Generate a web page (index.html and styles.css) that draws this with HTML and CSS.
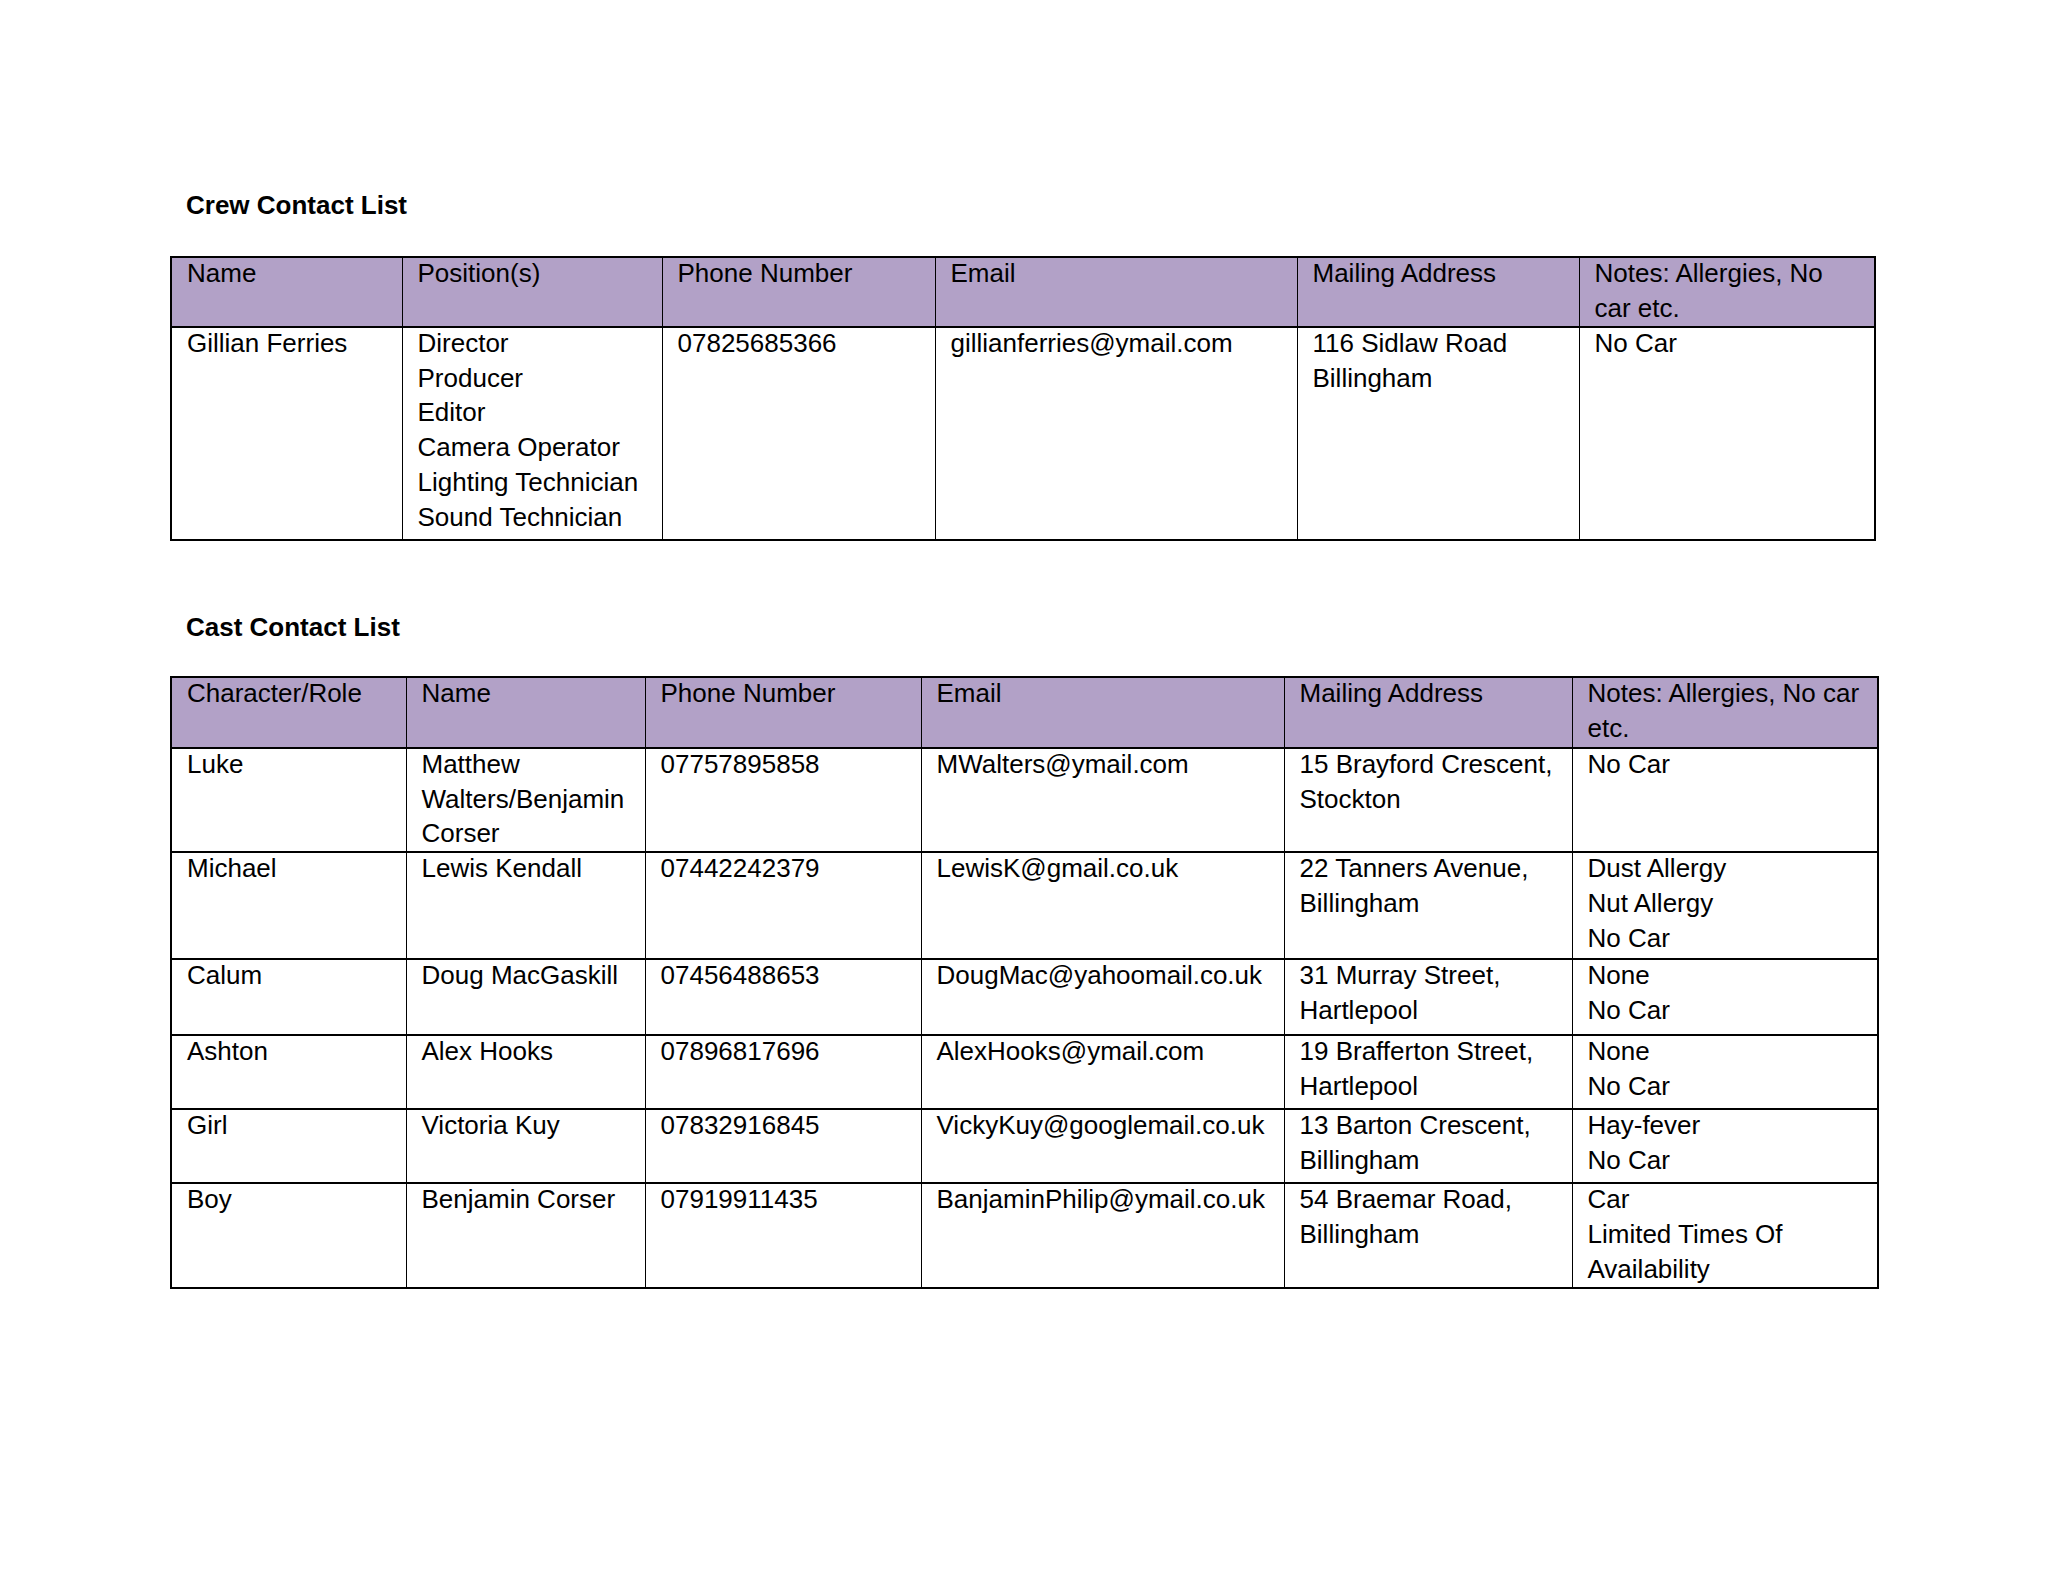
FILE: index.html
```html
<!DOCTYPE html>
<html lang="en">
<head>
<meta charset="utf-8">
<title>Contact Lists</title>
<link rel="stylesheet" href="styles.css">
</head>
<body>
<main class="page">
  <h2 class="title">Crew Contact List</h2>
  <table class="sheet crew">
    <colgroup>
      <col class="c231"><col class="c260"><col class="c273"><col class="c362"><col class="c282"><col class="c296">
    </colgroup>
    <tr class="r70">
      <th><div class="in">Name</div></th>
      <th><div class="in">Position(s)</div></th>
      <th><div class="in">Phone Number</div></th>
      <th><div class="in">Email</div></th>
      <th><div class="in">Mailing Address</div></th>
      <th><div class="in">Notes: Allergies, No<br>car etc.</div></th>
    </tr>
    <tr class="r213">
      <td><div class="in">Gillian Ferries</div></td>
      <td><div class="in">Director<br>Producer<br>Editor<br>Camera Operator<br>Lighting Technician<br>Sound Technician</div></td>
      <td><div class="in">07825685366</div></td>
      <td><div class="in">gillianferries@ymail.com</div></td>
      <td><div class="in">116 Sidlaw Road<br>Billingham</div></td>
      <td><div class="in">No Car</div></td>
    </tr>
  </table>

  <h2 class="title cast-title">Cast Contact List</h2>
  <table class="sheet cast">
    <colgroup>
      <col class="c235"><col class="c239"><col class="c276"><col class="c363"><col class="c288"><col class="c306">
    </colgroup>
    <tr class="r71">
      <th><div class="in">Character/Role</div></th>
      <th><div class="in">Name</div></th>
      <th><div class="in">Phone Number</div></th>
      <th><div class="in">Email</div></th>
      <th><div class="in">Mailing Address</div></th>
      <th><div class="in">Notes: Allergies, No car<br>etc.</div></th>
    </tr>
    <tr class="r104">
      <td><div class="in">Luke</div></td>
      <td><div class="in">Matthew<br>Walters/Benjamin<br>Corser</div></td>
      <td><div class="in">07757895858</div></td>
      <td><div class="in">MWalters@ymail.com</div></td>
      <td><div class="in">15 Brayford Crescent,<br>Stockton</div></td>
      <td><div class="in">No Car</div></td>
    </tr>
    <tr class="r107">
      <td><div class="in">Michael</div></td>
      <td><div class="in">Lewis Kendall</div></td>
      <td><div class="in">07442242379</div></td>
      <td><div class="in">LewisK@gmail.co.uk</div></td>
      <td><div class="in">22 Tanners Avenue,<br>Billingham</div></td>
      <td><div class="in">Dust Allergy<br>Nut Allergy<br>No Car</div></td>
    </tr>
    <tr class="r76">
      <td><div class="in">Calum</div></td>
      <td><div class="in">Doug MacGaskill</div></td>
      <td><div class="in">07456488653</div></td>
      <td><div class="in">DougMac@yahoomail.co.uk</div></td>
      <td><div class="in">31 Murray Street,<br>Hartlepool</div></td>
      <td><div class="in">None<br>No Car</div></td>
    </tr>
    <tr class="r74">
      <td><div class="in">Ashton</div></td>
      <td><div class="in">Alex Hooks</div></td>
      <td><div class="in">07896817696</div></td>
      <td><div class="in">AlexHooks@ymail.com</div></td>
      <td><div class="in">19 Brafferton Street,<br>Hartlepool</div></td>
      <td><div class="in">None<br>No Car</div></td>
    </tr>
    <tr class="r74">
      <td><div class="in">Girl</div></td>
      <td><div class="in">Victoria Kuy</div></td>
      <td><div class="in">07832916845</div></td>
      <td><div class="in">VickyKuy@googlemail.co.uk</div></td>
      <td><div class="in">13 Barton Crescent,<br>Billingham</div></td>
      <td><div class="in">Hay-fever<br>No Car</div></td>
    </tr>
    <tr class="r105">
      <td><div class="in">Boy</div></td>
      <td><div class="in">Benjamin Corser</div></td>
      <td><div class="in">07919911435</div></td>
      <td><div class="in">BanjaminPhilip@ymail.co.uk</div></td>
      <td><div class="in">54 Braemar Road,<br>Billingham</div></td>
      <td><div class="in">Car<br>Limited Times Of<br>Availability</div></td>
    </tr>
  </table>
</main>
</body>
</html>
```

FILE: styles.css
```css
html, body {
  margin: 0;
  padding: 0;
  background: #ffffff;
}

body {
  font-family: "Liberation Sans", Arial, sans-serif;
  color: #000000;
}

.page {
  padding: 188px 0 0 170px;
}

.title {
  margin: 0 0 33px 16px;
  font-size: 26px;
  line-height: 35px;
  font-weight: bold;
}

.cast-title {
  margin-bottom: 31px;
}

.sheet {
  border-collapse: collapse;
  table-layout: fixed;
  border: 2px solid #000000;
  font-size: 26px;
  line-height: 34.7px;
}

.crew {
  margin-bottom: 69px;
}

.sheet th,
.sheet td {
  border-left: 1px solid #000000;
  border-right: 1px solid #000000;
  border-top: 2px solid #000000;
  border-bottom: 2px solid #000000;
  padding: 0 0 0 15px;
  vertical-align: top;
  text-align: left;
  white-space: nowrap;
  font-weight: normal;
}

.sheet th {
  background: #b2a1c7;
}

.in {
  margin-top: -2px;
}

.c231 { width: 231px; }
.c260 { width: 260px; }
.c273 { width: 273px; }
.c362 { width: 362px; }
.c282 { width: 282px; }
.c296 { width: 296px; }

.c235 { width: 235px; }
.c239 { width: 239px; }
.c276 { width: 276px; }
.c363 { width: 363px; }
.c288 { width: 288px; }
.c306 { width: 306px; }

.r70 { height: 70px; }
.r71 { height: 71px; }
.r74 { height: 74px; }
.r76 { height: 76px; }
.r104 { height: 104px; }
.r105 { height: 105px; }
.r107 { height: 107px; }
.r213 { height: 213px; }
```
